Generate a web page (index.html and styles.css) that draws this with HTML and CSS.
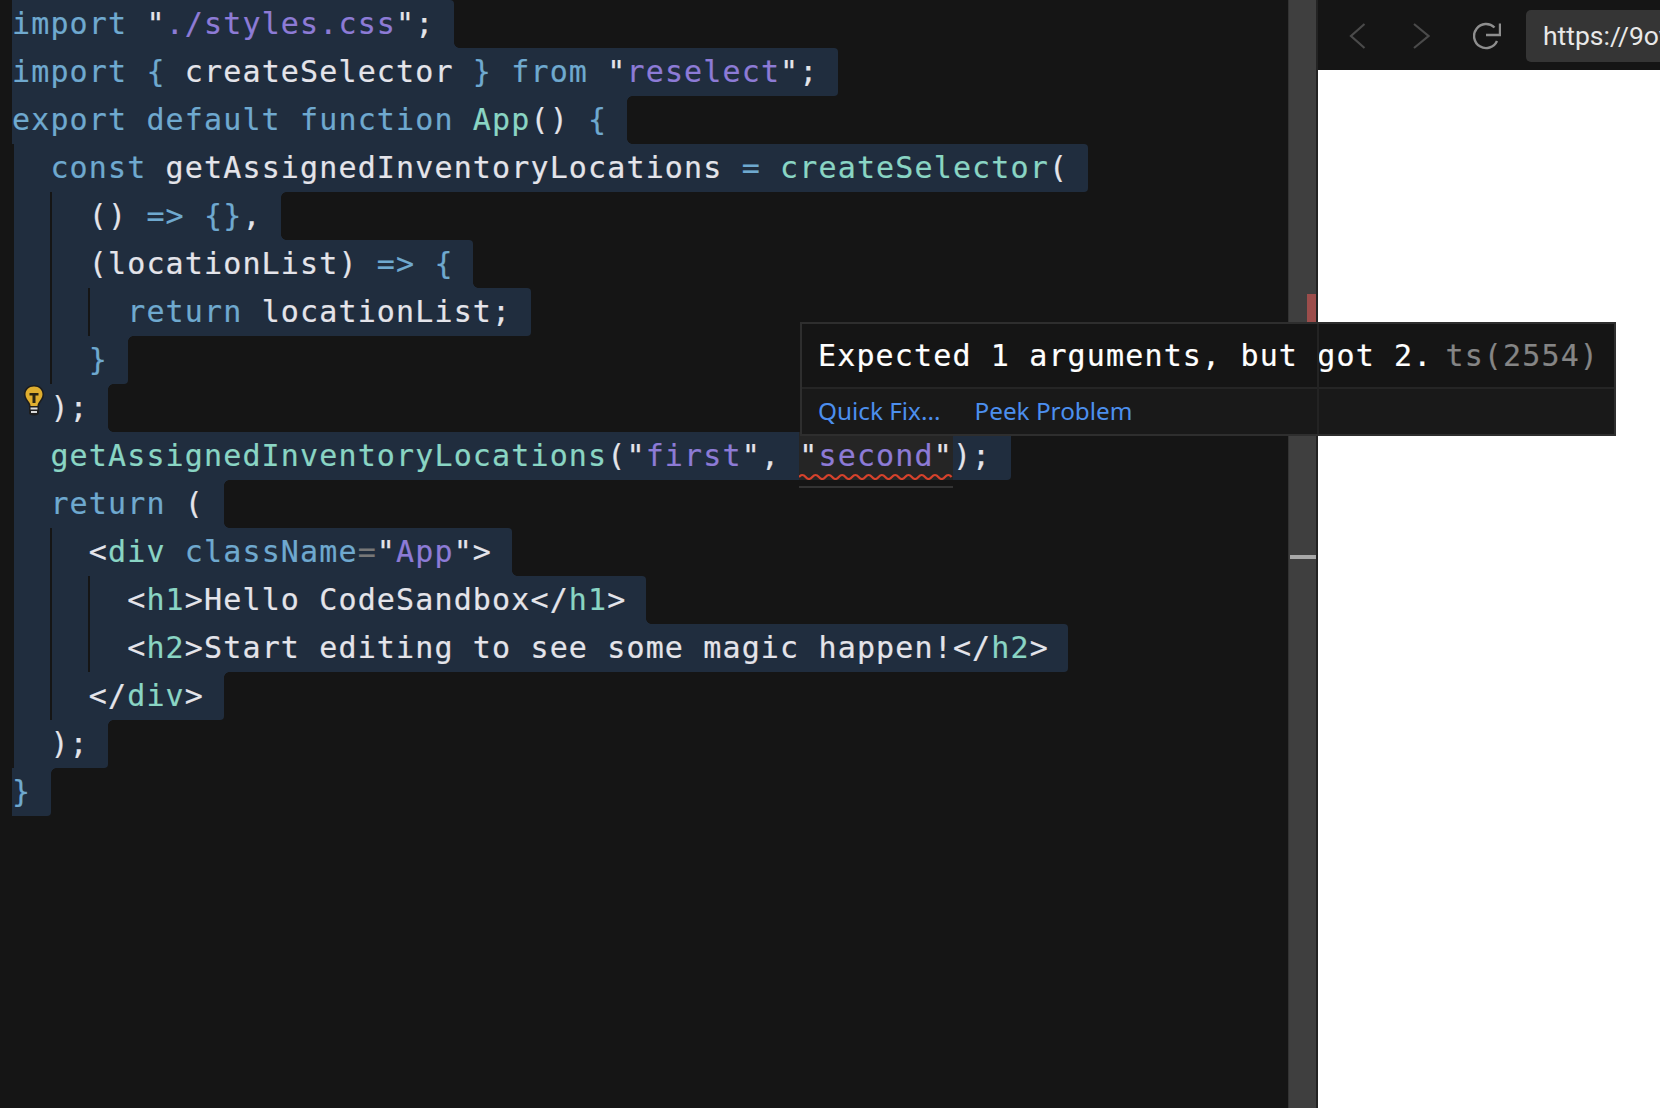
FILE: index.html
```html
<!DOCTYPE html>
<html lang="en">
<head>
<meta charset="utf-8">
<title>Editor</title>
<link rel="stylesheet" href="styles.css">
</head>
<body>
<div class="app">
  <main class="editor">
    <div class="ln"><span class="sel rt cbr"><b class="k">import</b> "<i class="s">./styles.css</i>";</span></div>
    <div class="ln"><span class="sel rt rb"><b class="k">import {</b> createSelector <b class="k">} from</b> "<i class="s">reselect</i>";</span></div>
    <div class="ln"><span class="sel ctr cbr"><b class="k">export default function</b> <b class="t">App</b>() <b class="k">{</b></span></div>
    <div class="ln in"><span class="sel rt rb">  <b class="k">const</b> getAssignedInventoryLocations <b class="k">=</b> <b class="t">createSelector</b>(</span></div>
    <div class="ln in"><span class="guide g1"></span><span class="sel ctr cbr">    () <b class="k">=&gt; {}</b>,</span></div>
    <div class="ln in"><span class="guide g1"></span><span class="sel rt cbr">    (locationList) <b class="k">=&gt; {</b></span></div>
    <div class="ln in"><span class="guide g1"></span><span class="guide g2"></span><span class="sel rt rb">      <b class="k">return</b> locationList;</span></div>
    <div class="ln in"><span class="guide g1"></span><span class="sel ctr rb">    <b class="k">}</b></span></div>
    <div class="ln in">
      <svg class="bulb" viewBox="0 0 22 32" aria-hidden="true">
        <path d="M11 1C5 1 1 5 1 10.500C1 14 3 16 4.500 18.500C5.500 20 6 21 6 23V29C6 30.500 7.500 31.500 11 31.500C14.500 31.500 16 30.500 16 29V23C16 21 16.500 20 17.500 18.500C19 16 21 14 21 10.500C21 5 17 1 11 1Z" fill="#1d1d1d"/>
        <path d="M11 2.500C6 2.500 2.500 6 2.500 10.500C2.500 13.500 4.500 15.500 6 18C7 19.500 7.500 20.500 7.500 22H14.500C14.500 20.500 15 19.500 16 18C17.500 15.500 19.500 13.500 19.500 10.500C19.500 6 16 2.500 11 2.500Z" fill="#dfae2f"/>
        <path d="M6.500 9H15.500V11.500H12.500V19H9.500V11.500H6.500Z" fill="#2a2412"/>
        <path d="M7.500 23.500H14.500V25.500H7.500ZM8 27H14V29H8Z" fill="#d9d9d9"/>
      </svg>
      <span class="sel ctr cbr">  );</span>
    </div>
    <div class="ln in err-ln"><span class="sel rt rb">  <b class="t">getAssignedInventoryLocations</b>("<i class="s">first</i>", <span class="err">"<i class="s">second</i>"<svg class="wave" viewBox="0 0 154 8" preserveAspectRatio="none" aria-hidden="true"><path d="M0 5q3.330-4 6.650 0t6.650 0 6.650 0 6.650 0 6.650 0 6.650 0 6.650 0 6.650 0 6.650 0 6.650 0 6.650 0 6.650 0 6.650 0 6.650 0 6.650 0 6.650 0 6.650 0 6.650 0 6.650 0 6.650 0 6.650 0 6.650 0 6.650 0" fill="none" stroke="#d6422c" stroke-width="2.200"/></svg></span>);</span></div>
    <div class="ln in"><span class="sel ctr cbr">  <b class="k">return</b> (</span></div>
    <div class="ln in"><span class="guide g1"></span><span class="sel rt cbr">    &lt;<b class="t">div</b> <b class="k">className</b><b class="eq">=</b>"<i class="s">App</i>"&gt;</span></div>
    <div class="ln in"><span class="guide g1"></span><span class="guide g2"></span><span class="sel rt cbr">      &lt;<b class="t">h1</b>&gt;Hello CodeSandbox&lt;/<b class="t">h1</b>&gt;</span></div>
    <div class="ln in"><span class="guide g1"></span><span class="guide g2"></span><span class="sel rt rb">      &lt;<b class="t">h2</b>&gt;Start editing to see some magic happen!&lt;/<b class="t">h2</b>&gt;</span></div>
    <div class="ln in"><span class="guide g1"></span><span class="sel ctr rb">    &lt;/<b class="t">div</b>&gt;</span></div>
    <div class="ln in"><span class="sel ctr rb">  );</span></div>
    <div class="ln"><span class="sel ctr rb"><b class="k">}</b></span></div>
  </main>
  <div class="track">
    <span class="mark-err"></span>
    <span class="mark-cur"></span>
  </div>
  <section class="preview">
    <header class="nav">
      <svg class="nav-ic" viewBox="0 0 18 28" aria-hidden="true"><path d="M16.500 2L3 14L16.500 26" fill="none" stroke="#4a4a4a" stroke-width="2.200"/></svg>
      <svg class="nav-ic fwd" viewBox="0 0 18 28" aria-hidden="true"><path d="M2 2L16.500 14L2 26" fill="none" stroke="#4a4a4a" stroke-width="2.200"/></svg>
      <svg class="reload" viewBox="0 0 28 28" aria-hidden="true"><path d="M24 19A12 12 0 1 1 21.500 5.500" fill="none" stroke="#8e8e8e" stroke-width="2.400"/><path d="M27 1.500V13H13" fill="none" stroke="#8e8e8e" stroke-width="2.400"/></svg>
      <div class="url">https://9ov</div>
    </header>
    <div class="page"></div>
  </section>
  <aside class="hover">
    <div class="hover-msg">Expected 1 arguments, but got 2.<span class="code">ts(2554)</span></div>
    <div class="hover-acts"><a class="act">Quick Fix...</a><a class="act">Peek Problem</a></div>
    <span class="seam"></span>
  </aside>
</div>
</body>
</html>
```
FILE: styles.css
```css
* { box-sizing: border-box; }
html, body { margin: 0; height: 100%; overflow: hidden; background: #151515; }
.app { position: relative; display: flex; width: 1660px; height: 1108px; overflow: hidden; }

.editor {
  width: 1288px;
  padding-left: 12px;
  font-family: "DejaVu Sans Mono", monospace;
  font-size: 30px;
  letter-spacing: 1.14px;
  -webkit-text-stroke: 0.2px currentColor;
  color: #e4e4ea;
}
.ln { position: relative; display: flex; height: 48px; line-height: 48px; white-space: pre; }
.ln b, .ln i { font-weight: 400; font-style: normal; }
.k { color: #6fa9cf; }
.s { color: #8d7bd6; }
.t { color: #8ad5c4; }
.eq { color: #777; }

.sel { position: relative; display: block; height: 48px; padding-right: 19.500px; background: #202d3e; }
.in .sel { margin-left: 2px; text-indent: -2px; }
.rt { border-top-right-radius: 4px; }
.rb { border-bottom-right-radius: 4px; }
.ctr::before, .cbr::after {
  content: "";
  position: absolute;
  left: 100%;
  width: 5px;
  height: 5px;
}
.ctr::before { top: 0; background: radial-gradient(circle at 100% 100%, transparent 4.500px, #202d3e 5px); }
.cbr::after { bottom: 0; background: radial-gradient(circle at 100% 0, transparent 4.500px, #202d3e 5px); }

.guide { position: absolute; top: 0; bottom: 0; z-index: 1; width: 2px; background: #151515; }
.g1 { left: 38px; }
.g2 { left: 76px; }

.bulb { position: absolute; left: 11px; top: 0; z-index: 2; width: 22px; height: 32px; }

.err { position: relative; display: inline-block; height: 48px; vertical-align: top; text-indent: 0; background: #252525; }
.err::after {
  content: "";
  position: absolute;
  left: 0;
  right: 0;
  top: 54px;
  height: 2px;
  background: #333;
}
.wave { position: absolute; left: 0; bottom: 0; width: 100%; height: 8px; }

.track { position: relative; width: 30px; background: #3f3f3f; border-left: 1px solid #333; border-right: 2px solid #232323; }
.mark-err { position: absolute; right: 0; top: 294px; width: 9px; height: 30px; background: #9c4d4b; }
.mark-cur { position: absolute; right: 0; left: 1px; top: 555px; height: 4px; background: #a8a8a8; }

.preview { flex: 1; min-width: 0; display: flex; flex-direction: column; }
.nav { display: flex; align-items: center; height: 70px; padding: 2px 0 0 30px; background: #151515; }
.nav-ic { width: 18px; height: 28px; flex: none; }
.fwd { margin-left: 46px; }
.reload { width: 28px; height: 28px; flex: none; margin-left: 43px; }
.url {
  flex: 1;
  min-width: 0;
  height: 52px;
  margin-left: 25px;
  padding-left: 17px;
  overflow: hidden;
  border-radius: 5px 0 0 5px;
  background: #353535;
  color: #e8e8e8;
  font-family: Roboto, sans-serif;
  font-size: 26.500px;
  line-height: 52px;
  white-space: nowrap;
}
.page { flex: 1; background: #fff; }

.hover {
  position: absolute;
  left: 800px;
  top: 322px;
  width: 816px;
  height: 114px;
  border: 2px solid #2e2e2e;
  background: #151515;
}
.hover-msg {
  height: 65px;
  padding-left: 16px;
  border-bottom: 2px solid #252525;
  font-family: "DejaVu Sans Mono", monospace;
  font-size: 30px;
  letter-spacing: 1.14px;
  -webkit-text-stroke: 0.2px currentColor;
  line-height: 63px;
  color: #fff;
  white-space: pre;
}
.code { margin-left: 13px; color: #858585; }
.hover-acts { display: flex; gap: 34px; height: 45px; padding-left: 16px; background: #191919; }
.act { font-family: "Noto Sans", sans-serif; font-size: 24.300px; line-height: 44px; color: #4c8fee; white-space: nowrap; }
.seam { position: absolute; left: 515px; top: 0; bottom: 0; width: 2px; background: #232323; }
```
